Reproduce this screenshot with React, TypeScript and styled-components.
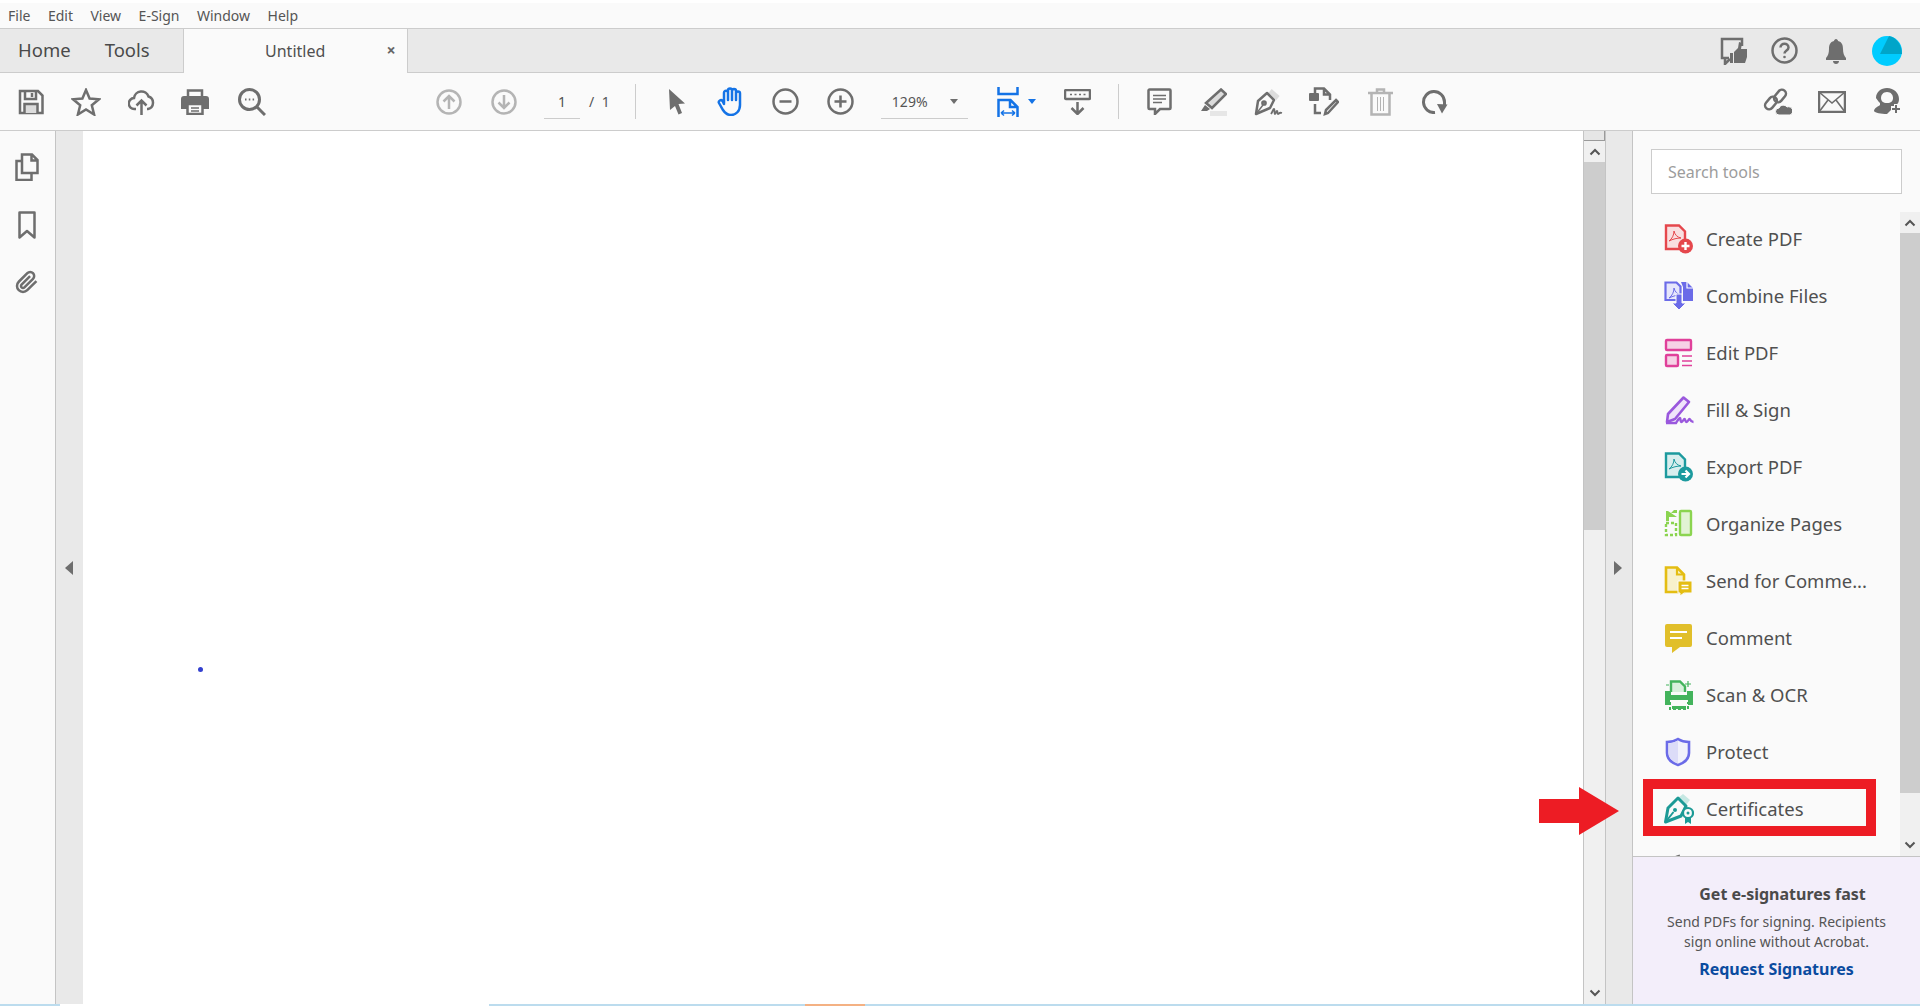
import React from 'react';
import styled, { createGlobalStyle } from 'styled-components';

const GlobalStyle = createGlobalStyle`
  html, body {
    margin: 0;
    padding: 0;
    height: 100%;
    overflow: hidden;
    background: #fafafa;
  }
  * {
    box-sizing: border-box;
  }
  body {
    font-family: 'Noto Sans', 'Open Sans', 'Liberation Sans', sans-serif;
    color: #505050;
  }
`;

const Window = styled.div`
  position: relative;
  display: flex;
  flex-direction: column;
  width: 1920px;
  height: 1006px;
  overflow: hidden;
`;

const MenuBar = styled.div`
  display: flex;
  height: 29px;
  padding: 1px 0 0 8px;
  gap: 17.5px;
  align-items: center;
  background: #fafafa;
  border-top: 3px solid #ffffff;
  border-bottom: 1px solid #cccccc;
`;

const MenuItem = styled.span`
  font-size: 14px;
  line-height: 20px;
  color: #555555;
`;

const TabBar = styled.div`
  display: flex;
  align-items: center;
  height: 44px;
  background: #e9e9e9;
  border-bottom: 1px solid #cccccc;
`;

const NavTab = styled.span<{ $ml: number }>`
  margin-top: -2px;
  font-size: 18.5px;
  color: #4a4a4a;
  margin-left: ${(p) => p.$ml}px;
`;

const DocTab = styled.div`
  display: flex;
  align-items: center;
  justify-content: center;
  position: relative;
  width: 225px;
  height: 44px;
  margin-left: 33px;
  background: #fafafa;
  border-left: 1px solid #cccccc;
  border-right: 1px solid #cccccc;
  font-size: 16px;
  color: #505050;
`;

const TabClose = styled.span`
  position: absolute;
  right: 11px;
  top: 10px;
  font-size: 16px;
  font-weight: 700;
  color: #666666;
`;

const TabActions = styled.div`
  display: flex;
  align-items: center;
  margin-left: auto;
  padding-right: 18px;
`;

const Toolbar = styled.div`
  display: flex;
  align-items: center;
  height: 58px;
  background: #fafafa;
  border-bottom: 1px solid #cccccc;
`;

const ToolSlot = styled.div<{ $ml: number }>`
  display: flex;
  flex: none;
  align-items: center;
  margin-left: ${(p) => p.$ml}px;
`;

const PageField = styled.div`
  flex: none;
  width: 36px;
  height: 34px;
  margin-left: 27px;
  line-height: 34px;
  text-align: center;
  font-size: 14px;
  border-bottom: 1px solid #cccccc;
`;

const PageTotal = styled.span`
  flex: none;
  margin-left: 9px;
  font-size: 14px;
  word-spacing: 4px;
  color: #555555;
`;

const Separator = styled.div<{ $ml: number }>`
  flex: none;
  width: 1px;
  height: 35px;
  margin-left: ${(p) => p.$ml}px;
  background: #cccccc;
`;

const ZoomField = styled.div`
  display: flex;
  flex: none;
  align-items: center;
  width: 87px;
  height: 34px;
  margin-left: 27px;
  padding-left: 11px;
  font-size: 14px;
  color: #555555;
  border-bottom: 1px solid #cccccc;
`;

const Caret = styled.span<{ $ml: number; $color: string }>`
  flex: none;
  width: 0;
  height: 0;
  margin-left: ${(p) => p.$ml}px;
  border-left: 4.5px solid transparent;
  border-right: 4.5px solid transparent;
  border-top: 5px solid ${(p) => p.$color};
`;

const ToolbarEnd = styled.div`
  display: flex;
  align-items: center;
  margin-left: auto;
  padding-right: 18px;
`;

const Body = styled.div`
  display: flex;
  flex: 1;
  min-height: 0;
`;

const LeftRail = styled.div`
  display: flex;
  flex: none;
  flex-direction: column;
  align-items: center;
  width: 56px;
  padding: 22px 1px 0 0;
  gap: 30px;
  background: #fafafa;
  border-right: 1px solid #c4c4c4;
`;

const Gutter = styled.div<{ $w: number; $pad: number }>`
  display: flex;
  flex: none;
  align-items: center;
  width: ${(p) => p.$w}px;
  padding-left: ${(p) => p.$pad}px;
  background: #e9e9e9;
`;

const Triangle = styled.span<{ $dir: 'left' | 'right' }>`
  width: 0;
  height: 0;
  border-top: 7px solid transparent;
  border-bottom: 7px solid transparent;
  border-${(p) => (p.$dir === 'left' ? 'right' : 'left')}: 8px solid #6e6e6e;
`;

const PageArea = styled.div`
  position: relative;
  flex: none;
  width: 1500px;
  background: #ffffff;
`;

const Dot = styled.span`
  position: absolute;
  left: 115px;
  top: 536px;
  width: 5px;
  height: 5px;
  border-radius: 50%;
  background: #3340cf;
`;

const ScrollColumn = styled.div`
  display: flex;
  flex: none;
  flex-direction: column;
  width: 23px;
  background: #f0f0f0;
  border-left: 1px solid #c4c4c4;
  border-right: 1px solid #c4c4c4;
`;

const ScrollCap = styled.div`
  height: 10px;
  background: #e6e6e6;
  border-bottom: 1px solid #9a9a9a;
  border-right: 1px solid #9a9a9a;
`;

const ScrollButton = styled.div<{ $h: number }>`
  display: flex;
  flex: none;
  align-items: center;
  justify-content: center;
  height: ${(p) => p.$h}px;
  background: #f0f0f0;
`;

const ScrollThumb = styled.div<{ $h: number }>`
  flex: none;
  height: ${(p) => p.$h}px;
  background: #cdcdcd;
`;

const ScrollTrack = styled.div`
  flex: 1;
`;

const ToolsPanel = styled.div`
  display: flex;
  flex: none;
  flex-direction: column;
  width: 288px;
  background: #fafafa;
  border-left: 1px solid #c4c4c4;
`;

const SearchArea = styled.div`
  flex: none;
  height: 81px;
  padding: 18px 0 0 18px;
`;

const SearchBox = styled.div`
  display: flex;
  align-items: center;
  width: 251px;
  height: 45px;
  padding-left: 16px;
  font-size: 16px;
  color: #9c9c9c;
  background: #ffffff;
  border: 1px solid #cccccc;
`;

const ToolsArea = styled.div`
  display: flex;
  flex: 1;
  min-height: 0;
`;

const ToolList = styled.div`
  flex: 1;
  overflow: hidden;
`;

const ToolRows = styled.div`
  margin-top: -2px;
`;

const ToolRow = styled.div`
  display: flex;
  align-items: center;
  height: 57px;
  padding-left: 31px;
  gap: 12px;
  font-size: 18.5px;
  color: #505050;
`;

const ToolGlyph = styled.span`
  display: flex;
  flex: none;
  width: 30px;
  height: 30px;
`;

const PanelScroll = styled.div`
  display: flex;
  flex: none;
  flex-direction: column;
  width: 20px;
  background: #f0f0f0;
`;

const Promo = styled.div`
  display: flex;
  flex: none;
  flex-direction: column;
  align-items: center;
  height: 148px;
  padding-top: 25px;
  text-align: center;
  background: #f3eefa;
  border-top: 1px solid #c4c4c4;
`;

const PromoTitle = styled.div`
  margin-left: 12px;
  font-size: 16px;
  line-height: 24px;
  font-weight: 700;
  color: #4a4a4a;
`;

const PromoText = styled.div`
  margin-top: 6px;
  font-size: 14px;
  line-height: 20px;
  color: #555555;
`;

const PromoLink = styled.a`
  margin-top: 5px;
  font-size: 16px;
  line-height: 24px;
  font-weight: 700;
  color: #0a4b9f;
`;

const TaskStrip = styled.div`
  display: flex;
  flex: none;
  height: 2px;
  background: #bcdcee;
`;

const StripPart = styled.span<{ $w: number; $color: string }>`
  flex: none;
  width: ${(p) => p.$w}px;
  background: ${(p) => p.$color};
`;

const HighlightBox = styled.div`
  position: absolute;
  left: 1643px;
  top: 779px;
  width: 233px;
  height: 57px;
  border: 10px solid #ed1c24;
`;

const ArrowMark = styled.svg`
  position: absolute;
  left: 1539px;
  top: 787px;
`;

const G = '#6e6e6e';
const L = '#b4b4b4';

const Ico = ({ w, h, vb, children }: { w: number; h: number; vb?: string; children: React.ReactNode }) => (
  <svg width={w} height={h} viewBox={vb ?? `0 0 ${w} ${h}`} fill="none" stroke={G} strokeWidth={2.5}>
    {children}
  </svg>
);

const Chevron = ({ down }: { down?: boolean }) => (
  <svg width="12" height="8" viewBox="0 0 12 8" fill="none" stroke="#555555" strokeWidth={2}>
    <path d={down ? 'M1.5 1.5 6 6l4.5-4.5' : 'M1.5 6.5 6 2l4.5 4.5'} />
  </svg>
);

const CircleArrow = ({ down }: { down?: boolean }) => (
  <svg width="26" height="26" viewBox="0 0 26 26" fill="none" stroke={L} strokeWidth={2.5}>
    <circle cx="13" cy="13" r="11.5" />
    <path d={down ? 'M13 6v13M7.5 13.5 13 19l5.5-5.5' : 'M13 20V7M7.5 12.5 13 7l5.5 5.5'} />
  </svg>
);

const AcrobatMark = ({ color }: { color: string }) => (
  <path d="M5 17c3-2 5-6 5-10 1 4 3 6 7 7-4 0-8 1-12 3z" stroke={color} strokeWidth={1} fill="none" />
);

const tools: { label: string; icon: React.ReactNode }[] = [
  {
    label: 'Create PDF',
    icon: (
      <svg width="30" height="30" viewBox="0 0 30 30" fill="none">
        <path d="M2 1.500h13l6 6V25H2z" fill="#f9dfe0" stroke="#e5474c" strokeWidth="2.400" />
        <AcrobatMark color="#e5474c" />
        <circle cx="21.500" cy="22" r="7.500" fill="#e5474c" />
        <path d="M21.500 18v8M17.500 22h8" stroke="#fff" strokeWidth="2.400" />
      </svg>
    ),
  },
  {
    label: 'Combine Files',
    icon: (
      <svg width="30" height="30" viewBox="0 0 30 30" fill="none">
        <path d="M1.500 1.500h11l4 4V19h-15z" fill="#e6e6fb" stroke="#6b6be8" strokeWidth="2.200" />
        <path d="M17 1h6l6 6v13H19V6z" fill="#6b6be8" />
        <path d="M23 1v6h6" stroke="#fff" strokeWidth="1.200" />
        <AcrobatMark color="#6b6be8" />
        <path d="M12 13h6v9h4l-7 7-7-7h4z" fill="#6b6be8" stroke="#fafafa" strokeWidth="1" />
      </svg>
    ),
  },
  {
    label: 'Edit PDF',
    icon: (
      <svg width="30" height="30" viewBox="0 0 30 30" fill="none">
        <rect x="2" y="2" width="25" height="10" rx="1" fill="#f6d2e6" stroke="#e0409a" strokeWidth="2.400" />
        <rect x="2" y="17" width="12" height="11" rx="1" fill="#f6d2e6" stroke="#e0409a" strokeWidth="2.400" />
        <path d="M18 18h10M18 23h10M18 27.500h10" stroke="#e0409a" strokeWidth="1.600" />
      </svg>
    ),
  },
  {
    label: 'Fill & Sign',
    icon: (
      <svg width="30" height="30" viewBox="0 0 30 30" fill="none">
        <path d="M19.500 2.500 25 7 11 24l-8 3 1-8z" fill="#f0e3fa" stroke="#9a58dd" strokeWidth="2.600" strokeLinejoin="round" />
        <path d="M2 28h10c2-3 3-5 4-5s0 4 1.500 4 2-3 3-3 .5 3 2 3 2-3 3-3 .5 3 4 3" stroke="#9a58dd" strokeWidth="2.400" />
      </svg>
    ),
  },
  {
    label: 'Export PDF',
    icon: (
      <svg width="30" height="30" viewBox="0 0 30 30" fill="none">
        <path d="M2 1.500h13l6 6V25H2z" fill="#d8eeee" stroke="#1c9a9e" strokeWidth="2.400" />
        <AcrobatMark color="#1c9a9e" />
        <circle cx="21.500" cy="22" r="7.500" fill="#1c9a9e" />
        <path d="M17.500 22h7M21.500 18.500 25 22l-3.500 3.500" stroke="#fff" strokeWidth="2.200" />
      </svg>
    ),
  },
  {
    label: 'Organize Pages',
    icon: (
      <svg width="30" height="30" viewBox="0 0 30 30" fill="none">
        <rect x="16" y="2" width="11" height="24" rx="1" fill="#e2f3d4" stroke="#8bd450" strokeWidth="2.400" />
        <path d="M2 14h10v12H2z" stroke="#8bd450" strokeWidth="2.400" strokeDasharray="3 2" />
        <path d="M13 1v3H7l3-3zM2 2h2l9 6H5v4H2z" fill="#8bd450" />
      </svg>
    ),
  },
  {
    label: 'Send for Comme...',
    icon: (
      <svg width="30" height="30" viewBox="0 0 30 30" fill="none">
        <path d="M2 1.500h11l7 7V26H2z" fill="#f8f1cc" stroke="#e4bd12" strokeWidth="2.600" />
        <path d="M13 1.500v7h7" stroke="#e4bd12" strokeWidth="2.200" />
        <path d="M14 15h14v12h-8l-4 3v-3h-2z" fill="#e4bd12" stroke="#fafafa" strokeWidth="1" />
        <path d="M17.500 19.500h7M17.500 22.500h7" stroke="#fff" strokeWidth="1.400" />
      </svg>
    ),
  },
  {
    label: 'Comment',
    icon: (
      <svg width="30" height="30" viewBox="0 0 30 30" fill="none">
        <path d="M3 1h23a2 2 0 0 1 2 2v19a2 2 0 0 1-2 2H16l-8 6v-6H3a2 2 0 0 1-2-2V3a2 2 0 0 1 2-2z" fill="#e1bf2a" />
        <path d="M6 9h17M6 15h12" stroke="#fff" strokeWidth="2" />
      </svg>
    ),
  },
  {
    label: 'Scan & OCR',
    icon: (
      <svg width="30" height="30" viewBox="0 0 30 30" fill="none">
        <path d="M7 12V1.500h9l5 5V12" fill="#d8f0dc" stroke="#43b35c" strokeWidth="2.400" />
        <path d="M1 11h6v4h16v-4h6v14h-5v-5H6v5H1z" fill="#43b35c" />
        <path d="M6 22v7h18v-7" stroke="#43b35c" strokeWidth="2" strokeDasharray="3 2" />
        <path d="M8 26h14v3H8z" fill="#43b35c" />
        <path d="M24 1v6M21 4h6M2 5h3" stroke="#43b35c" strokeWidth="1.200" />
      </svg>
    ),
  },
  {
    label: 'Protect',
    icon: (
      <svg width="30" height="30" viewBox="0 0 30 30" fill="none">
        <path d="M14 2c4 2.500 7 3 11 3v11c0 6-5 10-11 12C8 26 3 22 3 16V5c4 0 7-.500 11-3z" fill="#f1f1fb" stroke="#6b6be8" strokeWidth="2.600" />
        <path d="M14 3.500c-4 2-7 2.800-9.500 2.800V16c0 5 4.500 8.500 9.500 10.500z" fill="#dcdcf8" />
      </svg>
    ),
  },
  {
    label: 'Certificates',
    icon: (
      <svg width="30" height="30" viewBox="0 0 30 30" fill="none">
        <path d="M14 4l5-4 7 6-4 5z" fill="#c6e8e3" />
        <path d="M1.500 28 4 14 14 4l8 8-5 10z" fill="#fafafa" stroke="#1c9a96" strokeWidth="3" strokeLinejoin="round" />
        <path d="M1.500 28l8-10" stroke="#1c9a96" strokeWidth="2" />
        <circle cx="11" cy="16" r="2" fill="#1c9a96" />
        <circle cx="24" cy="19" r="5" fill="#fafafa" stroke="#1c9a96" strokeWidth="2.200" />
        <circle cx="24" cy="19" r="1.500" fill="#1c9a96" />
        <path d="M21 24v6l3-2 3 2v-6z" fill="#1c9a96" />
      </svg>
    ),
  },
];

const App = () => {
  return (
    <Window>
      <GlobalStyle />
      <MenuBar>
        {['File', 'Edit', 'View', 'E-Sign', 'Window', 'Help'].map((m) => (
          <MenuItem key={m}>{m}</MenuItem>
        ))}
      </MenuBar>

      <TabBar>
        <NavTab $ml={18}>Home</NavTab>
        <NavTab $ml={34}>Tools</NavTab>
        <DocTab>
          Untitled
          <TabClose>×</TabClose>
        </DocTab>
        <TabActions>
          <Ico w={28} h={28}>
            <path d="M9 21H2V2h20v7" />
            <path d="M5 21v6l5-5" />
            <path d="M10 16h3v10h-3z" fill={G} stroke="none" />
            <path d="M14 15l4-4 1-6c3 0 3 3 2 7h6v8l-2 6H14z" fill={G} stroke="none" />
          </Ico>
          <ToolSlot $ml={23}>
            <Ico w={27} h={27}>
              <circle cx="13.500" cy="13.500" r="12" />
              <path d="M9.500 10.500c0-5 8-5 8 0 0 3-4 3-4 6" />
              <circle cx="13.500" cy="20" r="1.300" fill={G} stroke="none" />
            </Ico>
          </ToolSlot>
          <ToolSlot $ml={27}>
            <Ico w={22} h={26}>
              <path d="M11 1c1 0 2 1 2 2 4 1 5 4 5 8 0 4 1 7 3 9v2H1v-2c2-2 3-5 3-9 0-4 1-7 5-8 0-1 1-2 2-2z" fill={G} stroke="none" />
              <path d="M8 23h6c0 4-6 4-6 0z" fill={G} stroke="none" />
            </Ico>
          </ToolSlot>
          <ToolSlot $ml={25}>
            <svg width="30" height="30" viewBox="0 0 30 30">
              <circle cx="15" cy="15" r="15" fill="#00ccff" />
              <path d="M17 0 8 18h22c0-9-6-17-13-18z" fill="#00a5c9" />
            </svg>
          </ToolSlot>
        </TabActions>
      </TabBar>

      <Toolbar>
        <ToolSlot $ml={18}>
          <Ico w={26} h={26}>
            <path d="M2 2h18l4.500 4.500V24H2z" />
            <path d="M7 2v8h11V2M14 4v4" />
            <path d="M6.500 24V15h13v9" fill="#dcdcdc" />
          </Ico>
        </ToolSlot>
        <ToolSlot $ml={27}>
          <Ico w={30} h={28}>
            <path d="M15 2l3.600 8.600 9.400.700-7.200 6 2.300 9.200L15 21.500l-8.100 5 2.300-9.200-7.200-6 9.400-.700z" />
          </Ico>
        </ToolSlot>
        <ToolSlot $ml={27}>
          <Ico w={27} h={27}>
            <path d="M8 21H6.500a5.500 5.500 0 0 1-.5-11A7.500 7.500 0 0 1 20.500 8.500 6.500 6.500 0 0 1 20 21h-1" />
            <path d="M13.500 27V13M8.500 17.500l5-5 5 5" />
          </Ico>
        </ToolSlot>
        <ToolSlot $ml={26}>
          <Ico w={28} h={26}>
            <path d="M7 7V1.500h14V7" />
            <path d="M3 7h22a3 3 0 0 1 3 3v10h-6v-5H6v5H0V10a3 3 0 0 1 3-3z" fill={G} stroke="none" />
            <path d="M6.500 15h15v10h-15z" />
            <path d="M10 19h8M10 22h8" strokeWidth="1.400" />
          </Ico>
        </ToolSlot>
        <ToolSlot $ml={29}>
          <Ico w={28} h={28}>
            <circle cx="11.500" cy="11.500" r="10" strokeWidth="3" />
            <path d="M18.500 18.500 27 27" strokeWidth="3" />
            <path d="M7 11.500h1.500M10.800 11.500h1.500M14.600 11.500h1.500" strokeWidth="1.800" />
          </Ico>
        </ToolSlot>

        <ToolSlot $ml={170}>
          <CircleArrow />
        </ToolSlot>
        <ToolSlot $ml={29}>
          <CircleArrow down />
        </ToolSlot>
        <PageField>1</PageField>
        <PageTotal>/ 1</PageTotal>
        <Separator $ml={25} />

        <ToolSlot $ml={32}>
          <svg width="17" height="26" viewBox="0 0 17 26">
            <path d="M1 0 17 14.500 10.500 15l3.500 9-3.500 1.500L7 17l-5 4z" fill={G} />
          </svg>
        </ToolSlot>
        <ToolSlot $ml={32}>
          <svg width="28" height="29" viewBox="0 0 28 29" fill="none" stroke="#1473e6" strokeWidth="2.500">
            <path d="M7 16V6a2 2 0 0 1 3.500-1.500M11 13V3.500a2 2 0 0 1 4 0V13M15 13V4a2 2 0 0 1 4 0v9M19 13V6.500a2 2 0 0 1 4 0V18c0 6-4 10-9 10-4 0-6-2-8-5l-4-7c-1-2 2-4 3.500-2L7 17" strokeLinecap="round" />
          </svg>
        </ToolSlot>
        <ToolSlot $ml={27}>
          <Ico w={27} h={27}>
            <circle cx="13.500" cy="13.500" r="12" />
            <path d="M7.500 13.500h12" />
          </Ico>
        </ToolSlot>
        <ToolSlot $ml={28}>
          <Ico w={27} h={27}>
            <circle cx="13.500" cy="13.500" r="12" />
            <path d="M7.500 13.500h12M13.500 7.500v12" />
          </Ico>
        </ToolSlot>
        <ZoomField>
          129%
          <Caret $ml={22} $color="#6e6e6e" />
        </ZoomField>
        <ToolSlot $ml={29}>
          <svg width="22" height="30" viewBox="0 0 22 30" fill="none" stroke="#1473e6" strokeWidth="2.500">
            <path d="M1.500 0v7h19V0M1.500 30V13h12l7 7v10M13 13v7h7" />
            <path d="M4 26h14M4 26l3-2.500M4 26l3 2.500M18 26l-3-2.500M18 26l-3 2.500" strokeWidth="1.600" />
          </svg>
        </ToolSlot>
        <Caret $ml={9} $color="#1473e6" />
        <ToolSlot $ml={28}>
          <Ico w={27} h={26}>
            <rect x="1" y="1" width="25" height="9" rx="1" />
            <path d="M6 5.500h2M10.500 5.500h2M15 5.500h2M19.500 5.500h2" strokeWidth="1.600" />
            <path d="M13.500 13v12M7.500 19l6 6 6-6" />
          </Ico>
        </ToolSlot>
        <Separator $ml={27} />

        <ToolSlot $ml={28}>
          <Ico w={25} h={27}>
            <path d="M2.500 1.500h20a1 1 0 0 1 1 1V20a1 1 0 0 1-1 1H13l-5 5v-5H2.500a1 1 0 0 1-1-1V2.500a1 1 0 0 1 1-1z" />
            <path d="M6 7.500h13M6 11h13M6 14.500h9" strokeWidth="1.400" />
          </Ico>
        </ToolSlot>
        <ToolSlot $ml={27}>
          <Ico w={28} h={28}>
            <path d="M22 1.500 27 6 13 20l-6-5z" fill="#dcdcdc" />
            <path d="M6 17l5 4-3 2H2z" fill={G} stroke="none" />
            <rect x="11" y="23" width="17" height="5" fill="#e6e6e6" stroke="none" />
          </Ico>
        </ToolSlot>
        <ToolSlot $ml={27}>
          <Ico w={29} h={28}>
            <path d="M16 3l8 7" stroke="#dcdcdc" strokeWidth="5" />
            <path d="M2 26 4 13l9-8 7 7-4 8z" strokeLinejoin="round" />
            <path d="M2 26l7-9" strokeWidth="1.400" />
            <circle cx="10" cy="15" r="1.600" />
            <path d="M17 26c2-3 2-5 3-5s0 5 1 5 1-3 2-3 0 3 1 3 1-2 4-1" strokeWidth="1.800" />
          </Ico>
        </ToolSlot>
        <ToolSlot $ml={26}>
          <Ico w={30} h={29}>
            <rect x="0" y="6" width="10" height="8" rx="1" fill={G} stroke="none" />
            <path d="M6 6V1.500h9l6 6V13M15 1.500v6h6M6 17v9h6" />
            <path d="M27 13l2 2-10 11-3 1 1-4z" />
          </Ico>
        </ToolSlot>
        <ToolSlot $ml={29}>
          <svg width="25" height="28" viewBox="0 0 25 28" fill="none" stroke={L} strokeWidth="2.500">
            <path d="M0 5h25M9 5V1.500h7V5M3.500 5v21.500h18V5" />
            <path d="M9.500 9v14M12.500 9v14M15.500 9v14" strokeWidth="1" />
          </svg>
        </ToolSlot>
        <ToolSlot $ml={28}>
          <svg width="27" height="24" viewBox="0 0 27 24" fill="none" stroke={G} strokeWidth="3">
            <path d="M14 22.500A10.500 10.500 0 1 1 23.500 12v3" />
            <path d="M16 14l10.500.5-5.500 9z" fill={G} stroke="none" />
          </svg>
        </ToolSlot>

        <ToolbarEnd>
          <Ico w={30} h={27}>
            <rect x="2" y="11" width="14" height="8" rx="4" transform="rotate(-50 9 15)" />
            <rect x="11" y="4" width="14" height="8" rx="4" transform="rotate(-50 18 8)" />
            <path d="M17 27a3.500 3.500 0 0 1 0-7c1-3 6-4 8-1a4 4 0 0 1 3 8z" fill={G} stroke="#fafafa" strokeWidth="1" />
          </Ico>
          <ToolSlot $ml={26}>
            <Ico w={28} h={22}>
              <rect x="1" y="1" width="26" height="20" />
              <path d="M1 1l13 11L27 1M1 21l9-12M27 21l-9-12" strokeWidth="1.600" />
            </Ico>
          </ToolSlot>
          <ToolSlot $ml={28}>
            <Ico w={28} h={27}>
              <path d="M13 0c7 0 12 5 12 11 0 3-1 5-3 6v1h-5v4l-4 4c-6 0-12-1-13-3 0-3 5-5 6-6v-2C4 13 2 10 2 10 2 4 7 0 13 0z" fill={G} stroke="none" />
              <path d="M13 4c-4 0-6 3-6 6s2 5 6 5 6-2 6-5-2-6-6-6z" fill="#fafafa" stroke="none" />
              <path d="M17 21h10M22 16v10" stroke="#fafafa" strokeWidth="4" />
              <path d="M18 21h8M22 17v8" strokeWidth="2" />
            </Ico>
          </ToolSlot>
        </ToolbarEnd>
      </Toolbar>

      <Body>
        <LeftRail>
          <Ico w={24} h={28}>
            <path d="M7 20V1.500h10l5.500 5.500V20zM16.500 1.500V7.500h6" />
            <path d="M7 8H1.500v19h15v-7" />
          </Ico>
          <Ico w={18} h={28}>
            <path d="M1.500 1.500h15v25L9 20l-7.500 6.500z" strokeLinejoin="round" />
          </Ico>
          <Ico w={24} h={26} vb="0 0 24 24">
            <path d="m21.440 11.050-9.190 9.190a6 6 0 0 1-8.490-8.490l8.570-8.570A4 4 0 1 1 18 8.840l-8.590 8.570a2 2 0 0 1-2.830-2.830l8.490-8.480" />
          </Ico>
        </LeftRail>
        <Gutter $w={27} $pad={9}>
          <Triangle $dir="left" />
        </Gutter>
        <PageArea>
          <Dot />
        </PageArea>
        <ScrollColumn>
          <ScrollCap />
          <ScrollButton $h={21}>
            <Chevron />
          </ScrollButton>
          <ScrollThumb $h={368} />
          <ScrollTrack />
          <ScrollButton $h={22}>
            <Chevron down />
          </ScrollButton>
        </ScrollColumn>
        <Gutter $w={26} $pad={8}>
          <Triangle $dir="right" />
        </Gutter>
        <ToolsPanel>
          <SearchArea>
            <SearchBox>Search tools</SearchBox>
          </SearchArea>
          <ToolsArea>
            <ToolList>
              <ToolRows>
                {tools.map((t) => (
                  <ToolRow key={t.label}>
                    <ToolGlyph>{t.icon}</ToolGlyph>
                    {t.label}
                  </ToolRow>
                ))}
                <ToolRow>
                  <ToolGlyph>
                    <Ico w={30} h={30}>
                      <path d="M6 14C6 8 12 6 16 5" strokeWidth="3" />
                    </Ico>
                  </ToolGlyph>
                </ToolRow>
              </ToolRows>
            </ToolList>
            <PanelScroll>
              <ScrollButton $h={21}>
                <Chevron />
              </ScrollButton>
              <ScrollThumb $h={560} />
              <ScrollTrack />
              <ScrollButton $h={22}>
                <Chevron down />
              </ScrollButton>
            </PanelScroll>
          </ToolsArea>
          <Promo>
            <PromoTitle>Get e-signatures fast</PromoTitle>
            <PromoText>
              Send PDFs for signing. Recipients
              <br />
              sign online without Acrobat.
            </PromoText>
            <PromoLink>Request Signatures</PromoLink>
          </Promo>
        </ToolsPanel>
      </Body>

      <TaskStrip>
        <StripPart $w={60} $color="#bcdcee" />
        <StripPart $w={429} $color="#ffffff" />
        <StripPart $w={316} $color="#bcdcee" />
        <StripPart $w={60} $color="#f4b183" />
      </TaskStrip>

      <HighlightBox />
      <ArrowMark width="80" height="48" viewBox="0 0 80 48">
        <path d="M0 12h40V0l40 24-40 24V36H0z" fill="#ed1c24" />
      </ArrowMark>
    </Window>
  );
};

export default App;
